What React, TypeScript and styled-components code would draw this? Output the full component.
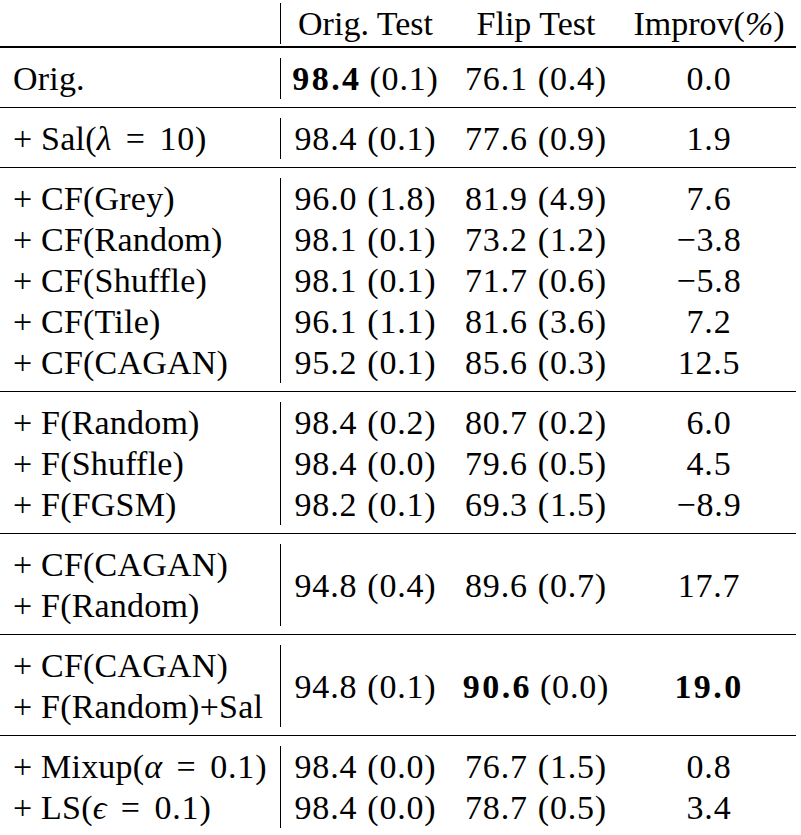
import React from "react";
import styled, { createGlobalStyle } from "styled-components";

const GlobalStyle = createGlobalStyle`
  html, body {
    margin: 0;
    padding: 0;
    background: #fff;
  }
  body {
    font-family: "Liberation Serif", "DejaVu Serif", serif;
    color: #000;
  }
`;

const Table = styled.div`
  width: 796px;
  font-family: "Liberation Serif", "DejaVu Serif", serif;
  font-size: 34px;
`;

const Group = styled.div<{ $head?: boolean }>`
  display: grid;
  grid-template-columns: 280px 170px 172px 174px;
  grid-auto-rows: 41px;
  line-height: 41px;
  padding: ${(p) => (p.$head ? "3px 0 2px" : "10px 0 8px")};
  border-bottom: ${(p) => (p.$head ? "2px" : "1px")} solid #000;
`;

const Label = styled.div`
  padding-left: 13px;
  letter-spacing: 0.2px;
  white-space: nowrap;
`;

const Cell = styled.div<{ $first?: boolean; $span?: number }>`
  display: flex;
  align-items: center;
  justify-content: center;
  white-space: nowrap;
  border-left: ${(p) => (p.$first ? "1px solid #000" : "none")};
  grid-row: ${(p) => (p.$span ? `span ${p.$span}` : "auto")};
`;

const Num = styled.span<{ $bold?: boolean }>`
  font-weight: ${(p) => (p.$bold ? 700 : 400)};
  letter-spacing: ${(p) => (p.$bold ? "2.4px" : "0.8px")};
`;

const Gap = styled.span<{ $narrow?: boolean }>`
  display: inline-block;
  width: ${(p) => (p.$narrow ? "8px" : "10px")};
`;

const MathVar = styled.i`
  font-style: italic;
`;

const Eq = styled.span`
  margin: 0 0.42em;
`;

const Pct = styled.i`
  font-style: italic;
`;

type Entry = { v: string; sd?: string; bold?: boolean };

type Row = {
  label: React.ReactNode[];
  cells: Entry[];
};

const Val = ({ v, sd, bold }: Entry) => (
  <>
    <Num $bold={bold}>{v}</Num>
    {sd && (
      <>
        <Gap $narrow={bold} />
        <Num>({sd})</Num>
      </>
    )}
  </>
);

const mathLabel = (name: string, sym: string, val: string) => (
  <>
    + {name}(<MathVar>{sym}</MathVar>
    <Eq>=</Eq>
    <Num>{val}</Num>)
  </>
);

const groups: Row[][] = [
  [{ label: ["Orig."], cells: [{ v: "98.4", sd: "0.1", bold: true }, { v: "76.1", sd: "0.4" }, { v: "0.0" }] }],
  [{ label: [mathLabel("Sal", "λ", "10")], cells: [{ v: "98.4", sd: "0.1" }, { v: "77.6", sd: "0.9" }, { v: "1.9" }] }],
  [
    { label: ["+ CF(Grey)"], cells: [{ v: "96.0", sd: "1.8" }, { v: "81.9", sd: "4.9" }, { v: "7.6" }] },
    { label: ["+ CF(Random)"], cells: [{ v: "98.1", sd: "0.1" }, { v: "73.2", sd: "1.2" }, { v: "\u22123.8" }] },
    { label: ["+ CF(Shuffle)"], cells: [{ v: "98.1", sd: "0.1" }, { v: "71.7", sd: "0.6" }, { v: "\u22125.8" }] },
    { label: ["+ CF(Tile)"], cells: [{ v: "96.1", sd: "1.1" }, { v: "81.6", sd: "3.6" }, { v: "7.2" }] },
    { label: ["+ CF(CAGAN)"], cells: [{ v: "95.2", sd: "0.1" }, { v: "85.6", sd: "0.3" }, { v: "12.5" }] },
  ],
  [
    { label: ["+ F(Random)"], cells: [{ v: "98.4", sd: "0.2" }, { v: "80.7", sd: "0.2" }, { v: "6.0" }] },
    { label: ["+ F(Shuffle)"], cells: [{ v: "98.4", sd: "0.0" }, { v: "79.6", sd: "0.5" }, { v: "4.5" }] },
    { label: ["+ F(FGSM)"], cells: [{ v: "98.2", sd: "0.1" }, { v: "69.3", sd: "1.5" }, { v: "\u22128.9" }] },
  ],
  [
    {
      label: ["+ CF(CAGAN)", "+ F(Random)"],
      cells: [{ v: "94.8", sd: "0.4" }, { v: "89.6", sd: "0.7" }, { v: "17.7" }],
    },
  ],
  [
    {
      label: ["+ CF(CAGAN)", "+ F(Random)+Sal"],
      cells: [{ v: "94.8", sd: "0.1" }, { v: "90.6", sd: "0.0", bold: true }, { v: "19.0", bold: true }],
    },
  ],
  [
    { label: [mathLabel("Mixup", "α", "0.1")], cells: [{ v: "98.4", sd: "0.0" }, { v: "76.7", sd: "1.5" }, { v: "0.8" }] },
    { label: [mathLabel("LS", "ϵ", "0.1")], cells: [{ v: "98.4", sd: "0.0" }, { v: "78.7", sd: "0.5" }, { v: "3.4" }] },
  ],
];

export default function App() {
  return (
    <>
      <GlobalStyle />
      <Table>
        <Group $head>
          <Label />
          <Cell $first>Orig. Test</Cell>
          <Cell>Flip Test</Cell>
          <Cell>
            Improv(<Pct>%</Pct>)
          </Cell>
        </Group>
        {groups.map((rows, gi) => (
          <Group key={gi}>
            {rows.map((row, ri) => {
              const span = row.label.length > 1 ? row.label.length : undefined;
              return (
                <React.Fragment key={ri}>
                  <Label>{row.label[0]}</Label>
                  {row.cells.map((c, ci) => (
                    <Cell key={ci} $first={ci === 0} $span={span}>
                      <Val {...c} />
                    </Cell>
                  ))}
                  {row.label.slice(1).map((l, li) => (
                    <Label key={li}>{l}</Label>
                  ))}
                </React.Fragment>
              );
            })}
          </Group>
        ))}
      </Table>
    </>
  );
}
